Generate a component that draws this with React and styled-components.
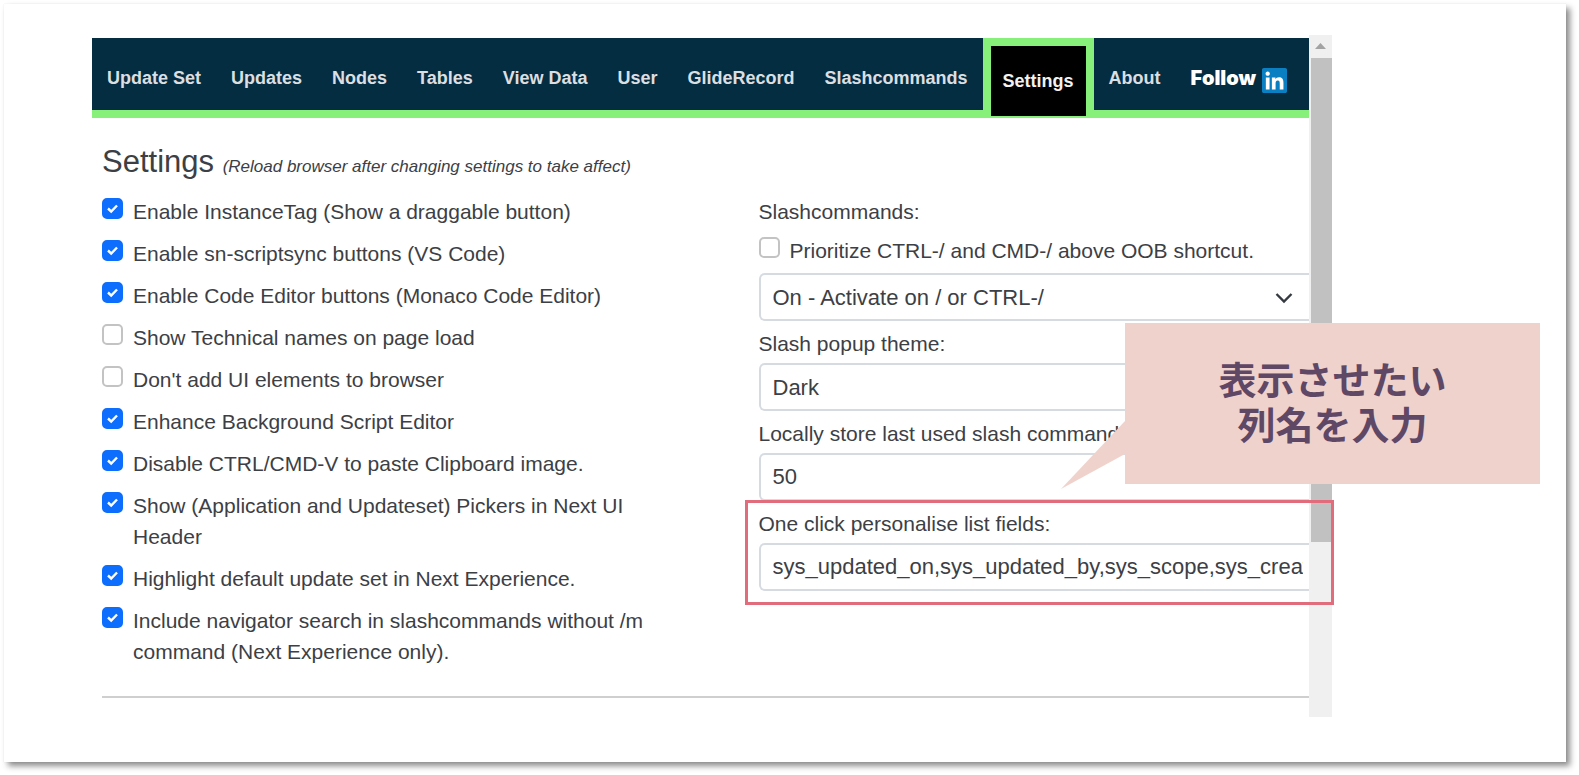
import React, { useState } from "react";
import styled, { createGlobalStyle } from "styled-components";
import { FaLinkedin } from "react-icons/fa";

const GlobalStyle = createGlobalStyle`
  * {
    box-sizing: border-box;
  }

  body {
    margin: 0;
    background: #fff;
    color: #3c4045;
    font-family: "Liberation Sans", Arial, sans-serif;
    font-size: 21px;
    line-height: 31px;
  }
`;

const Sheet = styled.div`
  margin: 4px 13px 13px 4px;
  padding: 31px 234px 45px 88px;
  background: #fff;
  box-shadow: 4px 4px 6px rgba(0, 0, 0, 0.45), 0 0 1px rgba(0, 0, 0, 0.1);
`;

const Panel = styled.div`
  position: relative;
  display: flex;
`;

const Main = styled.main`
  flex: 1;
  min-width: 0;
  padding-top: 3px;
`;

const Nav = styled.nav`
  display: flex;
  height: 80px;
  background: #042d42;
  border-bottom: 8px solid #87f07a;
`;

const NavLink = styled.a`
  display: flex;
  align-items: center;
  padding: 8px 15px 0;
  color: #dcdfe1;
  font-size: 18px;
  font-weight: bold;
  text-decoration: none;
  white-space: nowrap;
`;

const ActiveLink = styled(NavLink)`
  height: 78px;
  padding: 0 12px;
  background: #000;
  border: 8px solid #87f07a;
  border-bottom: none;
  color: #f2f2f2;
`;

const FollowLink = styled(NavLink)`
  gap: 6px;
  color: #fff;
  font-family: Inter, "Liberation Sans", sans-serif;
  font-size: 20px;
  font-weight: 900;
`;

const LinkedInLogo = styled(FaLinkedin)`
  width: 25px;
  height: 29px;
  margin-top: 4px;
  color: #0a80c3;
  background: linear-gradient(#fff, #fff) center / 80% 70% no-repeat;
`;

const Content = styled.section`
  padding-left: 10px;
`;

const Title = styled.h1`
  margin: 0;
  padding: 25px 0 10px;
  font-size: 31px;
  font-weight: normal;
  line-height: 38px;
`;

const Hint = styled.em`
  font-size: 17px;
`;

const Columns = styled.div`
  display: grid;
  grid-template-columns: 1fr 1fr;
  gap: 106px;
`;

const OptionList = styled.div`
  display: flex;
  flex-direction: column;
  gap: 11px;
`;

const OptionLabel = styled.label`
  display: flex;
  align-items: flex-start;
  gap: 10px;
`;

const CheckMark = styled.span`
  display: grid;
  flex: none;
  margin-top: 2px;

  input,
  svg {
    grid-area: 1 / 1;
    width: 21px;
    height: 21px;
    margin: 0;
  }

  input {
    appearance: none;
    background: #fff;
    border: 2px solid #c3c3c3;
    border-radius: 5px;
  }

  input:checked {
    background: #0d6efd;
    border-color: #0d6efd;
  }

  svg {
    pointer-events: none;
  }
`;

const Field = styled.div`
  position: relative;
  display: flex;
  flex-direction: column;
`;

const FieldLabel = styled.label`
  padding: 7px 0 4px;
`;

const GroupLabel = styled.div`
  margin-bottom: 8px;
`;

const ToggleRow = styled.div`
  margin-bottom: 7px;
`;

const Control = styled.input`
  appearance: none;
  width: 100%;
  height: 48px;
  padding: 0 6px 0 12px;
  background: #fff;
  border: 2px solid #d5dbe1;
  border-right: none;
  border-radius: 6px 0 0 6px;
  color: inherit;
  font: inherit;
  font-size: 22px;
`;

const SelectBox = styled.div`
  position: relative;
`;

const Chevron = styled.svg`
  position: absolute;
  top: 16px;
  right: 16px;
  width: 18px;
  height: 18px;
  pointer-events: none;
`;

const Highlight = styled.div`
  position: absolute;
  z-index: 1;
  inset: -1px -25px -14px -14px;
  border: 3px solid #e06c7c;
  pointer-events: none;
`;

const Divider = styled.hr`
  margin: 29px 0 19px;
  border: none;
  border-top: 2px solid #cfcfcf;
`;

const ScrollTrack = styled.div`
  display: flex;
  flex-direction: column;
  width: 23px;
  padding-left: 2px;
  background: #f0f0f0;
`;

const ScrollArrow = styled.svg`
  width: 21px;
  height: 23px;
`;

const ScrollThumb = styled.div`
  height: 71%;
  background: #c1c1c1;
`;

const Callout = styled.aside`
  position: absolute;
  z-index: 2;
  top: 288px;
  right: -208px;
  display: grid;
  place-items: center;
  width: 415px;
  height: 161px;
  padding-bottom: 8px;
  background: #f0d2cc;
  color: #5f4766;
  font-family: "Noto Sans CJK JP", sans-serif;
  font-size: 38px;
  font-weight: bold;
  line-height: 45px;
  text-align: center;
`;

const CalloutTail = styled.svg`
  position: absolute;
  top: 98px;
  right: 100%;
  width: 64px;
  height: 69px;
`;

const tabs = [
  "Update Set",
  "Updates",
  "Nodes",
  "Tables",
  "View Data",
  "User",
  "GlideRecord",
  "Slashcommands",
  "Settings",
  "About",
];

const options = [
  { text: "Enable InstanceTag (Show a draggable button)", on: true },
  { text: "Enable sn-scriptsync buttons (VS Code)", on: true },
  { text: "Enable Code Editor buttons (Monaco Code Editor)", on: true },
  { text: "Show Technical names on page load", on: false },
  { text: "Don't add UI elements to browser", on: false },
  { text: "Enhance Background Script Editor", on: true },
  { text: "Disable CTRL/CMD-V to paste Clipboard image.", on: true },
  {
    text: "Show (Application and Updateset) Pickers in Next UI Header",
    on: true,
  },
  { text: "Highlight default update set in Next Experience.", on: true },
  {
    text: "Include navigator search in slashcommands without /m command (Next Experience only).",
    on: true,
  },
];

function Option({ text, on }) {
  const [checked, setChecked] = useState(on);

  return (
    <OptionLabel>
      <CheckMark>
        <input
          type="checkbox"
          checked={checked}
          onChange={() => setChecked(!checked)}
        />
        {checked && (
          <svg viewBox="0 0 21 21" fill="none" stroke="#fff" strokeWidth="2.4">
            <path d="M6 10.5l3.2 3L15 7.5" />
          </svg>
        )}
      </CheckMark>
      <span>{text}</span>
    </OptionLabel>
  );
}

function Select({ id, labelledBy, children }) {
  return (
    <SelectBox>
      <Control as="select" id={id} aria-labelledby={labelledBy}>
        {children}
      </Control>
      <Chevron viewBox="0 0 18 18" fill="none" stroke="#343a40" strokeWidth="2.4">
        <path d="M1.5 5L9 12.5L16.5 5" />
      </Chevron>
    </SelectBox>
  );
}

function App() {
  return (
    <>
      <GlobalStyle />
      <Sheet>
        <Panel>
          <Main>
            <Nav>
              {tabs.map((tab) => {
                const Link = tab === "Settings" ? ActiveLink : NavLink;
                return (
                  <Link key={tab} href="#">
                    {tab}
                  </Link>
                );
              })}
              <FollowLink href="#">
                Follow
                <LinkedInLogo />
              </FollowLink>
            </Nav>
            <Content>
              <Title>
                Settings{" "}
                <Hint>(Reload browser after changing settings to take affect)</Hint>
              </Title>
              <Columns>
                <OptionList>
                  {options.map((option) => (
                    <Option key={option.text} {...option} />
                  ))}
                </OptionList>
                <div>
                  <GroupLabel id="slash-label">Slashcommands:</GroupLabel>
                  <ToggleRow>
                    <Option
                      text="Prioritize CTRL-/ and CMD-/ above OOB shortcut."
                      on={false}
                    />
                  </ToggleRow>
                  <Select id="slash" labelledBy="slash-label">
                    <option>On - Activate on / or CTRL-/</option>
                  </Select>
                  <Field>
                    <FieldLabel htmlFor="theme">Slash popup theme:</FieldLabel>
                    <Select id="theme">
                      <option>Dark</option>
                    </Select>
                  </Field>
                  <Field>
                    <FieldLabel htmlFor="history">
                      Locally store last used slash commands:
                    </FieldLabel>
                    <Control id="history" defaultValue="50" />
                  </Field>
                  <Field>
                    <FieldLabel htmlFor="fields">
                      One click personalise list fields:
                    </FieldLabel>
                    <Control
                      id="fields"
                      defaultValue="sys_updated_on,sys_updated_by,sys_scope,sys_created_on"
                    />
                    <Highlight />
                  </Field>
                </div>
              </Columns>
              <Divider />
            </Content>
          </Main>
          <ScrollTrack>
            <ScrollArrow viewBox="0 0 21 23">
              <path d="M4 14L9.500 8L15 14Z" fill="#a3a3a3" />
            </ScrollArrow>
            <ScrollThumb />
          </ScrollTrack>
          <Callout>
            <div>
              表示させたい
              <br />
              列名を入力
            </div>
            <CalloutTail viewBox="0 0 64 69">
              <path d="M64 0L0 68L64 33Z" fill="#f0d2cc" />
            </CalloutTail>
          </Callout>
        </Panel>
      </Sheet>
    </>
  );
}

export default App;
